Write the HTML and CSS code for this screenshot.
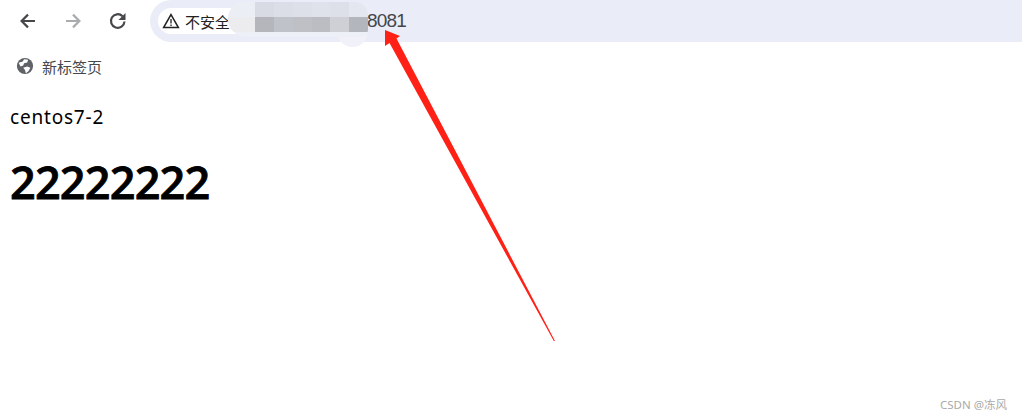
FILE: index.html
```html
<!DOCTYPE html>
<html lang="zh">
<head>
<meta charset="utf-8">
<title>centos7-2</title>
<link rel="stylesheet" href="styles.css">
</head>
<body>
<header class="toolbar">
  <nav class="nav">
    <svg class="nav-icon" viewBox="0 0 20 20"><path class="stroke dark" d="M17 10H4M10 3.600 3.600 10l6.400 6.400"/></svg>
    <svg class="nav-icon" viewBox="0 0 20 20"><path class="stroke light" d="M3 10h13M10 3.600l6.400 6.400-6.400 6.400"/></svg>
    <svg class="nav-icon" viewBox="0 0 20 20"><path class="stroke dark" d="M16.500 10.500A6.800 6.800 0 1 1 14.500 5.200"/><path class="fill-dark" d="M17.500 2v7h-7z"/></svg>
  </nav>
  <div class="omnibox">
    <div class="chip">
      <svg class="warn" viewBox="0 0 18 18"><path class="warn-outline" d="M9 2.600 16.400 15.600H1.600z"/><path class="warn-mark" d="M9 7v4.500M9 12.500v1.500"/></svg>
      <span class="chip-text">不安全</span>
    </div>
    <div class="url">
      <div class="bulge" aria-hidden="true"></div>
      <div class="mosaic" aria-hidden="true">
        <i class="t1"></i><i class="t2"></i><i class="t3"></i><i class="t4"></i><i class="t5"></i><i class="t6"></i><i class="t7"></i>
        <i class="b1"></i><i class="b2"></i><i class="b3"></i><i class="b4"></i><i class="b5"></i><i class="b6"></i><i class="b7"></i>
      </div>
      <span class="port">8081</span>
    </div>
  </div>
</header>
<div class="bookmarks">
  <svg class="globe" viewBox="0 0 20 20"><circle class="globe-disc" cx="10" cy="10" r="9"/><path class="globe-land" d="M3 6.500 7.500 5 9 2.500l4.500.5L12.500 6 9 7 8 9.500 5 10.500zM8 12l4.500-1.500 3.500 1.500-2 3.500-3 2.500-1-3.500z"/></svg>
  <span class="bookmark-label">新标签页</span>
</div>
<main class="page">
  <p class="host">centos7-2</p>
  <h1 class="count">22222222</h1>
</main>
<svg class="arrow" viewBox="0 0 1022 420"><path class="arrow-shape" d="M385 30 400 36 396.500 38.500 555 341 553.800 341 389.500 43 385 46z"/></svg>
<span class="mark">CSDN @冻风</span>
</body>
</html>
```
FILE: styles.css
```css
* { box-sizing: border-box; }
html, body { margin: 0; height: 420px; overflow: hidden; background: #fff; }
body { position: relative; font-family: "Noto Sans", "Noto Sans CJK SC", sans-serif; color: #000; }

.toolbar { display: flex; height: 42px; }
.nav { display: flex; width: 150px; gap: 25px; padding: 11px 0 0 18px; }
.nav-icon { width: 20px; height: 20px; }
.stroke { fill: none; stroke-width: 2.200; }
.dark { stroke: #45474a; }
.light { stroke: #a9abad; }
.fill-dark { fill: #45474a; }

.omnibox { flex: 1; display: flex; align-items: center; background: #eaedf7; border-radius: 21px 0 0 21px; padding: 0 0 0 8px; }
.chip { display: flex; align-items: center; gap: 5px; height: 26px; width: 80px; padding-left: 4px; background: #fff; border-radius: 13px 0 0 13px; }
.warn { width: 18px; height: 18px; flex: none; }
.warn-outline { fill: none; stroke: #222; stroke-width: 1.500; }
.warn-mark { stroke: #222; stroke-width: 1.300; fill: none; }
.chip-text { font-size: 15px; color: #222; white-space: nowrap; }

.url { position: relative; flex: 1; display: flex; align-items: center; height: 100%; padding-left: 129px; }
.port { font-family: "Liberation Sans", sans-serif; font-size: 19px; letter-spacing: -.8px; color: #44464a; }

.mosaic { position: absolute; left: -10px; top: 2px; width: 140px; height: 35px; display: grid; grid-template-columns: 27px repeat(6, 1fr); grid-template-rows: 15px 15px 5px; background: #eef0f7; border-radius: 18px 14px 8px 20px; overflow: hidden; }
.mosaic i { display: block; }
.bulge { position: absolute; left: 100px; top: 26px; width: 29px; height: 21px; background: #f1f2f9; border-radius: 0 0 14px 14px; }
.t1 { background: #eceef5; } .t2 { background: #d9dbe4; } .t3 { background: #dcdee7; } .t4 { background: #dee0e9; }
.t5 { background: #e0e2eb; } .t6 { background: #dddfe9; } .t7 { background: #e4e6f0; }
.b1 { background: #ececef; } .b2 { background: #b5b6bc; } .b3 { background: #c0c2c9; } .b4 { background: #bfc0c5; }
.b5 { background: #bcbdc2; } .b6 { background: #ced0d6; } .b7 { background: #b4b6bd; }

.bookmarks { display: flex; align-items: center; gap: 8px; height: 48px; padding: 0 0 0 16px; }
.globe { width: 18px; height: 18px; }
.globe-disc { fill: #5f6368; }
.globe-land { fill: #fff; }
.bookmark-label { font-size: 15px; color: #45474a; }

.page { padding-left: 10px; }
.host { margin: 12px 0 0; font-size: 19px; line-height: 30px; letter-spacing: .8px; }
.count { margin: 20px 0 0; font-family: "Open Sans", "Noto Sans", sans-serif; font-size: 45px; line-height: 60px; letter-spacing: -.8px; font-weight: 600; -webkit-text-stroke: .8px #000; }

.arrow { position: absolute; left: 0; top: 0; width: 1022px; height: 420px; pointer-events: none; }
.arrow-shape { fill: #ff2116; }
.mark { position: absolute; right: 15px; top: 396px; font-size: 11.500px; color: #a9a9a9; white-space: nowrap; }
```
